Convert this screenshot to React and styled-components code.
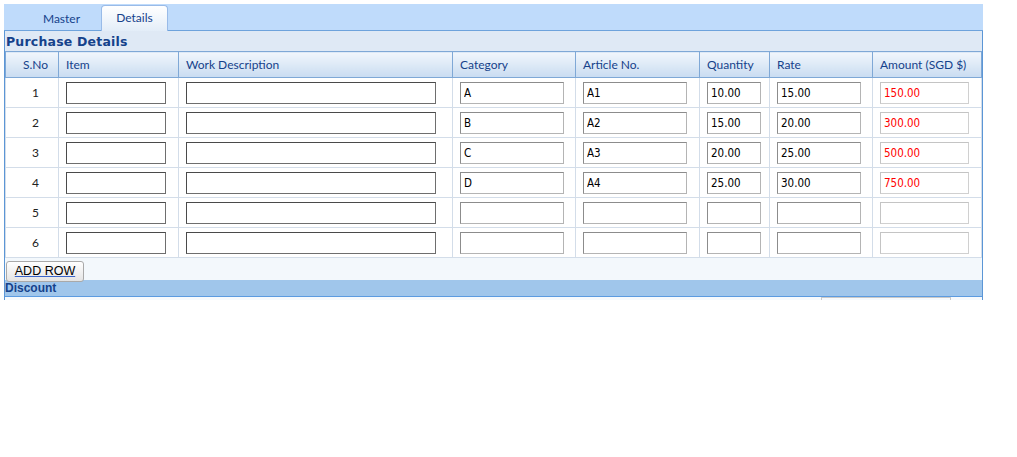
import React from 'react';
import styled, { createGlobalStyle } from 'styled-components';

const GlobalStyle = createGlobalStyle`
  body {
    margin: 0;
    background: #fff;
    font-family: Lato, "Liberation Sans", sans-serif;
  }
`;

const Page = styled.div`
  width: 979px;
  margin: 4px 0 0 4px;
`;

const TabStrip = styled.div`
  display: flex;
  align-items: flex-end;
  gap: 6px;
  height: 27px;
  padding-left: 24px;
  background: #bfdbfb;
  border-bottom: 1px solid #6ea3dc;
  box-sizing: border-box;
`;

const Tab = styled.div`
  width: 67px;
  box-sizing: border-box;
  display: flex;
  align-items: center;
  justify-content: center;
  font-size: 12px;
  color: #15428b;
  border: 1px solid ${(p) => (p.active ? '#99bbe8' : 'transparent')};
  border-bottom: none;
  border-radius: 4px 4px 0 0;
  background: ${(p) => (p.active ? 'linear-gradient(#ffffff, #e3edf8)' : 'transparent')};
  margin-bottom: ${(p) => (p.active ? '-1px' : '0')};
  height: ${(p) => (p.active ? '26px' : '25px')};
  padding-bottom: ${(p) => (p.active ? '2px' : '0')};
`;

const Panel = styled.div`
  border-left: 1px solid #5b96d6;
  border-right: 1px solid #5b96d6;
`;

const PanelTitle = styled.div`
  height: 20px;
  line-height: 21px;
  padding-left: 1px;
  background: #dfe9f5;
  font-family: "DejaVu Sans", Verdana, sans-serif;
  font-weight: bold;
  font-size: 12.5px;
  letter-spacing: 0.2px;
  color: #15428b;
`;

const Grid = styled.table`
  width: 977px;
  table-layout: fixed;
  border-collapse: collapse;
  border: 1px solid #5d8fca;
  background: #fff;
`;

const HeadCell = styled.th`
  height: 25px;
  padding: 0 0 0 7px;
  text-align: ${(p) => (p.center ? 'center' : 'left')};
  font-weight: normal;
  font-size: 12px;
  color: #15428b;
  background: linear-gradient(#f1f6fc, #c9dcf1);
  border: 1px solid #7fa8d6;
`;

const Cell = styled.td`
  height: 29px;
  padding: 0 0 0 7px;
  font-size: 12px;
  color: #222;
  text-align: ${(p) => (p.center ? 'center' : 'left')};
  border: 1px solid #d3dde9;
`;

const Field = styled.input`
  display: block;
  box-sizing: border-box;
  width: ${(p) => p.w}px;
  height: 22px;
  padding: 0 3px;
  margin: 0;
  font-family: "DejaVu Sans Condensed", "Liberation Sans", sans-serif;
  font-size: 11.5px;
  color: ${(p) => (p.money ? '#ff0000' : '#000')};
  background: #fff;
  border: 1px solid ${(p) => p.tone};
  border-top-color: ${(p) => p.topTone};
  border-left-color: ${(p) => p.topTone};
  outline: none;
`;

const ButtonBar = styled.div`
  height: 22px;
  padding: 1px 0 0 1px;
  box-sizing: border-box;
  background: #f3f8fc;
`;

const AddButton = styled.button`
  width: 78px;
  height: 21px;
  padding: 0;
  font-family: "Liberation Sans", Arial, sans-serif;
  font-size: 12.5px;
  color: #000;
  text-decoration: underline;
  text-decoration-color: #3a64c8;
  background: linear-gradient(#ffffff, #e4e4e4);
  border: 1px solid #a9a9a9;
  border-radius: 3px;
`;

const DiscountBar = styled.div`
  height: 16px;
  line-height: 16px;
  background: #a0c6eb;
  border-bottom: 1px solid #5c9be0;
  font-family: "Liberation Sans", Arial, sans-serif;
  font-weight: bold;
  font-size: 12px;
  color: #15428b;
`;

const DiscountRow = styled.div`
  display: flex;
  justify-content: flex-end;
  height: 3px;
  padding-right: 31px;
  background: #f7fafd;
`;

const DiscountBox = styled.div`
  width: 128px;
  border-top: 1px solid #c8c8c8;
  border-left: 1px solid #c8c8c8;
  border-right: 1px solid #c8c8c8;
`;

const columns = [
  { title: 'S.No', width: 53, center: true },
  { title: 'Item', width: 120 },
  { title: 'Work Description', width: 274 },
  { title: 'Category', width: 123 },
  { title: 'Article No.', width: 124 },
  { title: 'Quantity', width: 70 },
  { title: 'Rate', width: 103 },
  { title: 'Amount (SGD $)', width: 109 },
];

const rows = [
  { category: 'A', article: 'A1', qty: '10.00', rate: '15.00', amount: '150.00' },
  { category: 'B', article: 'A2', qty: '15.00', rate: '20.00', amount: '300.00' },
  { category: 'C', article: 'A3', qty: '20.00', rate: '25.00', amount: '500.00' },
  { category: 'D', article: 'A4', qty: '25.00', rate: '30.00', amount: '750.00' },
  { category: '', article: '', qty: '', rate: '', amount: '' },
  { category: '', article: '', qty: '', rate: '', amount: '' },
];

const dark = { tone: '#6e6e6e', topTone: '#4a4a4a' };
const grey = { tone: '#b4b4b4', topTone: '#8c8c8c' };
const pale = { tone: '#d0d0d0', topTone: '#c4c4c4' };

export default function App() {
  return (
    <Page>
      <GlobalStyle />
      <TabStrip>
        <Tab>Master</Tab>
        <Tab active>Details</Tab>
      </TabStrip>
      <Panel>
        <PanelTitle>Purchase Details</PanelTitle>
        <Grid>
          <colgroup>
            {columns.map((c) => (
              <col key={c.title} style={{ width: c.width }} />
            ))}
          </colgroup>
          <thead>
            <tr>
              {columns.map((c) => (
                <HeadCell key={c.title} center={c.center}>{c.title}</HeadCell>
              ))}
            </tr>
          </thead>
          <tbody>
            {rows.map((r, i) => (
              <tr key={i}>
                <Cell center>{i + 1}</Cell>
                <Cell><Field w={100} {...dark} readOnly /></Cell>
                <Cell><Field w={250} {...dark} readOnly /></Cell>
                <Cell><Field w={104} {...grey} value={r.category} readOnly /></Cell>
                <Cell><Field w={104} {...grey} value={r.article} readOnly /></Cell>
                <Cell><Field w={54} {...grey} value={r.qty} readOnly /></Cell>
                <Cell><Field w={84} {...grey} value={r.rate} readOnly /></Cell>
                <Cell><Field w={89} {...pale} money value={r.amount} readOnly /></Cell>
              </tr>
            ))}
          </tbody>
        </Grid>
        <ButtonBar>
          <AddButton>ADD ROW</AddButton>
        </ButtonBar>
        <DiscountBar>Discount</DiscountBar>
        <DiscountRow>
          <DiscountBox />
        </DiscountRow>
      </Panel>
    </Page>
  );
}
